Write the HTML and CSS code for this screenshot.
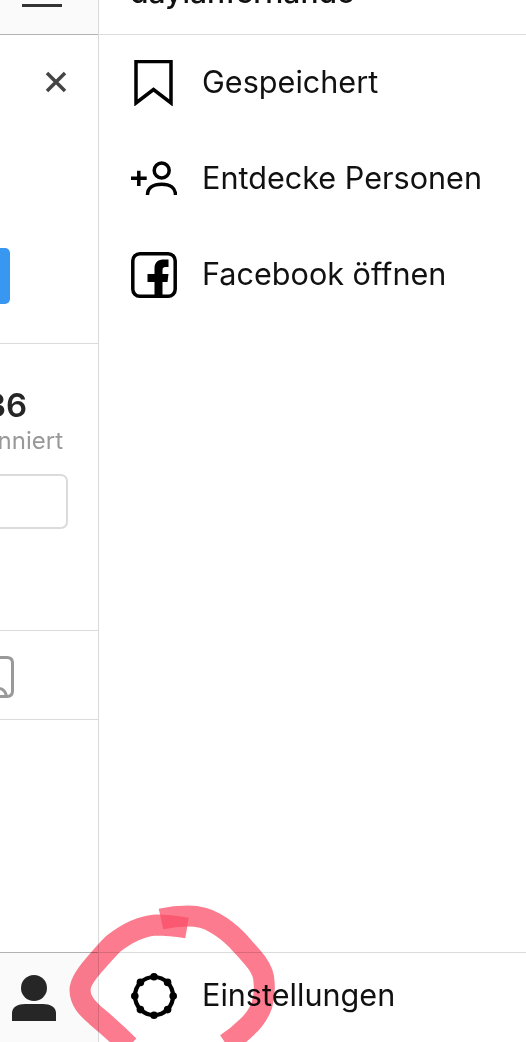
FILE: index.html
```html
<html>
	<head>
		<title>Menu</title>
		<link rel="stylesheet" href="styles.css">
	</head>
	<body>
		<div class="screen">
			<div class="profile">
				<div class="topbar"><div class="burger"></div></div>
				<div class="closerow">
					<svg class="closeicon" viewBox="0 0 22 22"><path d="M2 2 L20 20 M20 2 L2 20"/></svg>
				</div>
				<div class="suggest">
					<div class="bluebutton"></div>
				</div>
				<div class="stats">
					<div class="statnum">36</div>
					<div class="statlabel">abonniert</div>
					<div class="editbutton"></div>
				</div>
				<div class="tabs">
					<svg class="tagicon" viewBox="0 0 14 42"><path d="M0 1.500 H7 C10.500 1.500 12.500 3.500 12.500 7 V35 C12.500 38.500 10.500 40.500 7 40.500 H0 M0 32.500 C3 33 5.500 36 6.500 40"/></svg>
				</div>
				<div class="feed"></div>
				<div class="bottomnav">
					<svg class="usericon" viewBox="0 0 44 46"><circle cx="22" cy="13" r="13"/><path d="M0 46 V38 C0 32 6 29 13 29 H31 C38 29 44 32 44 38 V46 Z"/></svg>
				</div>
			</div>
			<div class="drawer">
				<div class="drawerhead"><div class="username">daylanfernando</div></div>
				<div class="menu">
					<div class="menuitem">
						<svg class="menuicon" viewBox="0 0 46 46"><path class="line" d="M5 1.500 H40 V43 L22.500 29.500 L5 43 Z"/></svg>
						<span>Gespeichert</span>
					</div>
					<div class="menuitem">
						<svg class="menuicon" viewBox="0 0 46 46"><path class="line" d="M0 22.300 H15.700 M7.800 14.700 V30"/><circle class="line" cx="30.700" cy="14.500" r="7.500"/><path class="line" d="M16.500 39 C16.500 32 22 28.200 30.700 28.200 C39 28.200 44.500 32 44.500 39"/></svg>
						<span>Entdecke Personen</span>
					</div>
					<div class="menuitem">
						<svg class="menuicon" viewBox="0 0 46 46"><rect class="line" x="1.800" y="1.800" width="42.400" height="42.400" rx="7"/><path class="solid" d="M23.500 44 V30 H16.500 V22 H23.500 V16 C23.500 10 27.500 7.500 33 7.500 H37.500 V15 H34.500 C32.500 15 31.500 16 31.500 18 V22 H37.500 L36.500 30 H31.500 V44 Z"/></svg>
						<span>Facebook öffnen</span>
					</div>
				</div>
				<div class="settings">
					<svg class="menuicon" viewBox="0 0 46 46">
						<circle class="ring" cx="23" cy="23" r="19"/>
						<circle class="solid" cx="23" cy="3.800" r="3.800"/>
						<circle class="solid" cx="23" cy="42.200" r="3.800"/>
						<circle class="solid" cx="3.800" cy="23" r="3.800"/>
						<circle class="solid" cx="42.200" cy="23" r="3.800"/>
						<circle class="solid" cx="9.400" cy="9.400" r="3.800"/>
						<circle class="solid" cx="36.600" cy="9.400" r="3.800"/>
						<circle class="solid" cx="9.400" cy="36.600" r="3.800"/>
						<circle class="solid" cx="36.600" cy="36.600" r="3.800"/>
					</svg>
					<span>Einstellungen</span>
				</div>
			</div>
			<!-- hand drawn circle on top of the screenshot -->
			<svg class="scribble" viewBox="0 0 526 1042">
				<path d="M187 928 C175 926 165 925 156 925 C141 926 127 933 113 944 C106 951 100 958 94 965 C87 973 80 983 80 990 C80 1001 87 1008 96 1016 C107 1025 117 1034 129 1046"/>
				<path d="M161 919 C170 917 180 916 188 916 C198 916 207 918 215 923 C224 928 230 933 237 940 C244 948 251 955 257 963 C262 970 264 975 264 982 C265 990 264 997 262 1005 C259 1013 255 1020 247 1027 C241 1033 235 1038 226 1044"/>
			</svg>
		</div>
	</body>
</html>
```

FILE: styles.css
```css
html, body{
	margin: 0;
	padding: 0;
	height: 100%;
	overflow: hidden;
	background-color: white;
}
body{
	font-family: "Inter", "Liberation Sans", sans-serif;
}

.screen{
	position: relative;
	display: flex;
	width: 526px;
	height: 1042px;
	overflow: hidden;
}

/* left column, the profile pushed away by the drawer */
.profile{
	display: flex;
	flex-direction: column;
	flex: none;
	width: 98px;
	height: 100%;
	border-right: 1px solid #d9d9d9;
}
.topbar{
	flex: none;
	height: 34px;
	background-color: #fafafa;
	border-bottom: 1px solid #b2b2b2;
	display: flex;
	justify-content: flex-end;
}
.burger{
	width: 40px;
	height: 3px;
	margin: 4px 36px 0 0;
	background-color: #333;
}
.closerow{
	flex: none;
	height: 94px;
	display: flex;
	justify-content: flex-end;
	align-items: flex-start;
}
.closeicon{
	width: 22px;
	height: 22px;
	margin: 36px 31px 0 0;
	fill: none;
	stroke: #444;
	stroke-width: 3.500;
}
.suggest{
	flex: none;
	box-sizing: border-box;
	height: 215px;
	border-bottom: 1px solid #dbdbdb;
}
.bluebutton{
	width: 10px;
	height: 56px;
	margin-top: 119px;
	background-color: #3897f0;
	border-radius: 0 5px 5px 0;
}
.stats{
	flex: none;
	height: 287px;
	box-sizing: border-box;
	border-bottom: 1px solid #dbdbdb;
	padding-top: 43px;
}
.statnum{
	font-size: 33px;
	font-weight: 600;
	line-height: 36px;
	color: #262626;
	text-align: right;
	margin-right: 71px;
	white-space: nowrap;
	direction: rtl;
}
.statlabel{
	font-size: 24px;
	line-height: 30px;
	margin-top: 3px;
	color: #999;
	margin-right: 35px;
	white-space: nowrap;
	direction: rtl;
}
.editbutton{
	width: 68px;
	height: 55px;
	box-sizing: border-box;
	margin-top: 18px;
	border: 2px solid #dbdbdb;
	border-left: none;
	border-radius: 0 7px 7px 0;
}
.tabs{
	flex: none;
	height: 89px;
	box-sizing: border-box;
	border-bottom: 1px solid #dbdbdb;
}
.tagicon{
	display: block;
	width: 14px;
	height: 42px;
	margin-top: 25px;
	fill: none;
	stroke: #999;
	stroke-width: 3;
}
.feed{
	flex: 1;
}
.bottomnav{
	flex: none;
	height: 90px;
	box-sizing: border-box;
	background-color: #fafafa;
	border-top: 1px solid #b2b2b2;
	padding: 22px 0 0 12px;
}
.usericon{
	display: block;
	width: 44px;
	height: 46px;
	fill: #262626;
}

/* right part, the open drawer */
.drawer{
	flex: 1;
	display: flex;
	flex-direction: column;
	color: #111;
}
.drawerhead{
	flex: none;
	height: 34px;
	border-bottom: 1px solid #dbdbdb;
	overflow: hidden;
}
.username{
	margin: -26px 0 0 31px;
	font-size: 30px;
	line-height: 36px;
	font-weight: 500;
	white-space: nowrap;
}
.menu{
	flex: 1;
}
.menuitem{
	display: flex;
	align-items: center;
	height: 96px;
	padding-left: 32px;
	font-size: 30.600px;
}
.menuitem span, .settings span{
	margin: 0 0 3px 25px;
	white-space: nowrap;
}
.menuicon{
	flex: none;
	width: 46px;
	height: 46px;
}
.line{
	fill: none;
	stroke: black;
	stroke-width: 3.500;
}
.ring{
	fill: none;
	stroke: black;
	stroke-width: 4.200;
}
.solid{
	fill: black;
}
.settings{
	flex: none;
	display: flex;
	align-items: center;
	height: 90px;
	box-sizing: border-box;
	border-top: 1px solid #dbdbdb;
	padding: 0 0 3px 32px;
	font-size: 30.600px;
}

.scribble{
	position: absolute;
	left: 0;
	top: 0;
	width: 526px;
	height: 1042px;
	fill: none;
	stroke: #fb4f68;
	stroke-opacity: 0.75;
	stroke-width: 21;
	mix-blend-mode: multiply;
	pointer-events: none;
}
```
